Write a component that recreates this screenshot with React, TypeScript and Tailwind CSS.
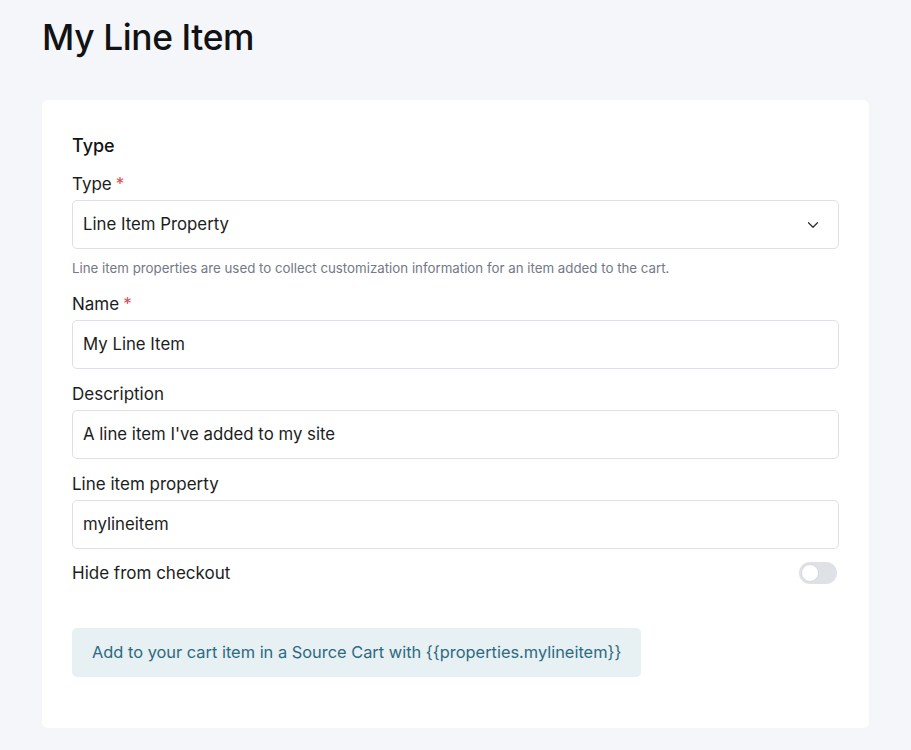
import { ChevronDown } from 'lucide-react'

const font = { fontFamily: 'Inter, "Noto Sans", sans-serif' }

function Label({ text, required }: { text: string; required?: boolean }) {
  return (
    <div className="h-6 text-[17px] leading-6 text-[#1b1d21]">
      {text}
      {required && <span className="ml-1 text-[#e5484d]">*</span>}
    </div>
  )
}

function TextInput({ value }: { value: string }) {
  return (
    <div className="mt-1 flex h-[49px] items-center rounded-[5px] border border-[#dde1e7] bg-white px-[10px] text-[16.8px] text-[#1b1d21]">
      {value}
    </div>
  )
}

export default function App() {
  return (
    <div className="min-h-[750px] bg-[#f5f6fa] px-[42px] pt-[18px] pb-[23px]" style={font}>
      <h1 className="h-10 text-[35.4px] leading-10 font-medium tracking-[-0.4px] text-[#111214]">My Line Item</h1>

      <div className="mt-[42px] rounded-md bg-white px-[30px] pt-8 pb-[51px]">
        <div className="h-7 text-[18px] leading-7 font-medium text-[#111214]">Type</div>

        <div className="mt-3">
          <Label text="Type" required />
          <div className="mt-1 flex h-[49px] items-center justify-between rounded-[5px] border border-[#dde1e7] bg-white pl-[10px] pr-[16px] text-[16.8px] text-[#1b1d21]">
            <span>Line Item Property</span>
            <ChevronDown className="h-[18px] w-[18px] text-[#2a2c30]" strokeWidth={1.6} />
          </div>
          <p className="mt-[9px] h-5 text-[13.3px] leading-5 text-[#737985]">
            Line item properties are used to collect customization information for an item added to the cart.
          </p>
        </div>

        <div className="mt-[14px]">
          <Label text="Name" required />
          <TextInput value="My Line Item" />
        </div>

        <div className="mt-[13px]">
          <Label text="Description" />
          <TextInput value="A line item I've added to my site" />
        </div>

        <div className="mt-[13px]">
          <Label text="Line item property" />
          <TextInput value="mylineitem" />
        </div>

        <div className="mt-3 flex h-6 items-center justify-between">
          <span className="text-[17px] leading-6 text-[#1b1d21]">Hide from checkout</span>
          <button
            type="button"
            role="switch"
            aria-checked="false"
            className="mr-[2px] flex h-[22px] w-[38px] items-center rounded-full bg-[#dee1e6] px-[2px]"
          >
            <span className="h-[18px] w-[18px] rounded-full border border-[#d6d9de] bg-white" />
          </button>
        </div>

        <div className="mt-[43px] inline-flex h-[49px] items-center rounded-[5px] bg-[#e7f0f3] px-5 text-[16.4px] text-[#2c6a80]">
          Add to your cart item in a Source Cart with {'{{properties.mylineitem}}'}
        </div>
      </div>
    </div>
  )
}
